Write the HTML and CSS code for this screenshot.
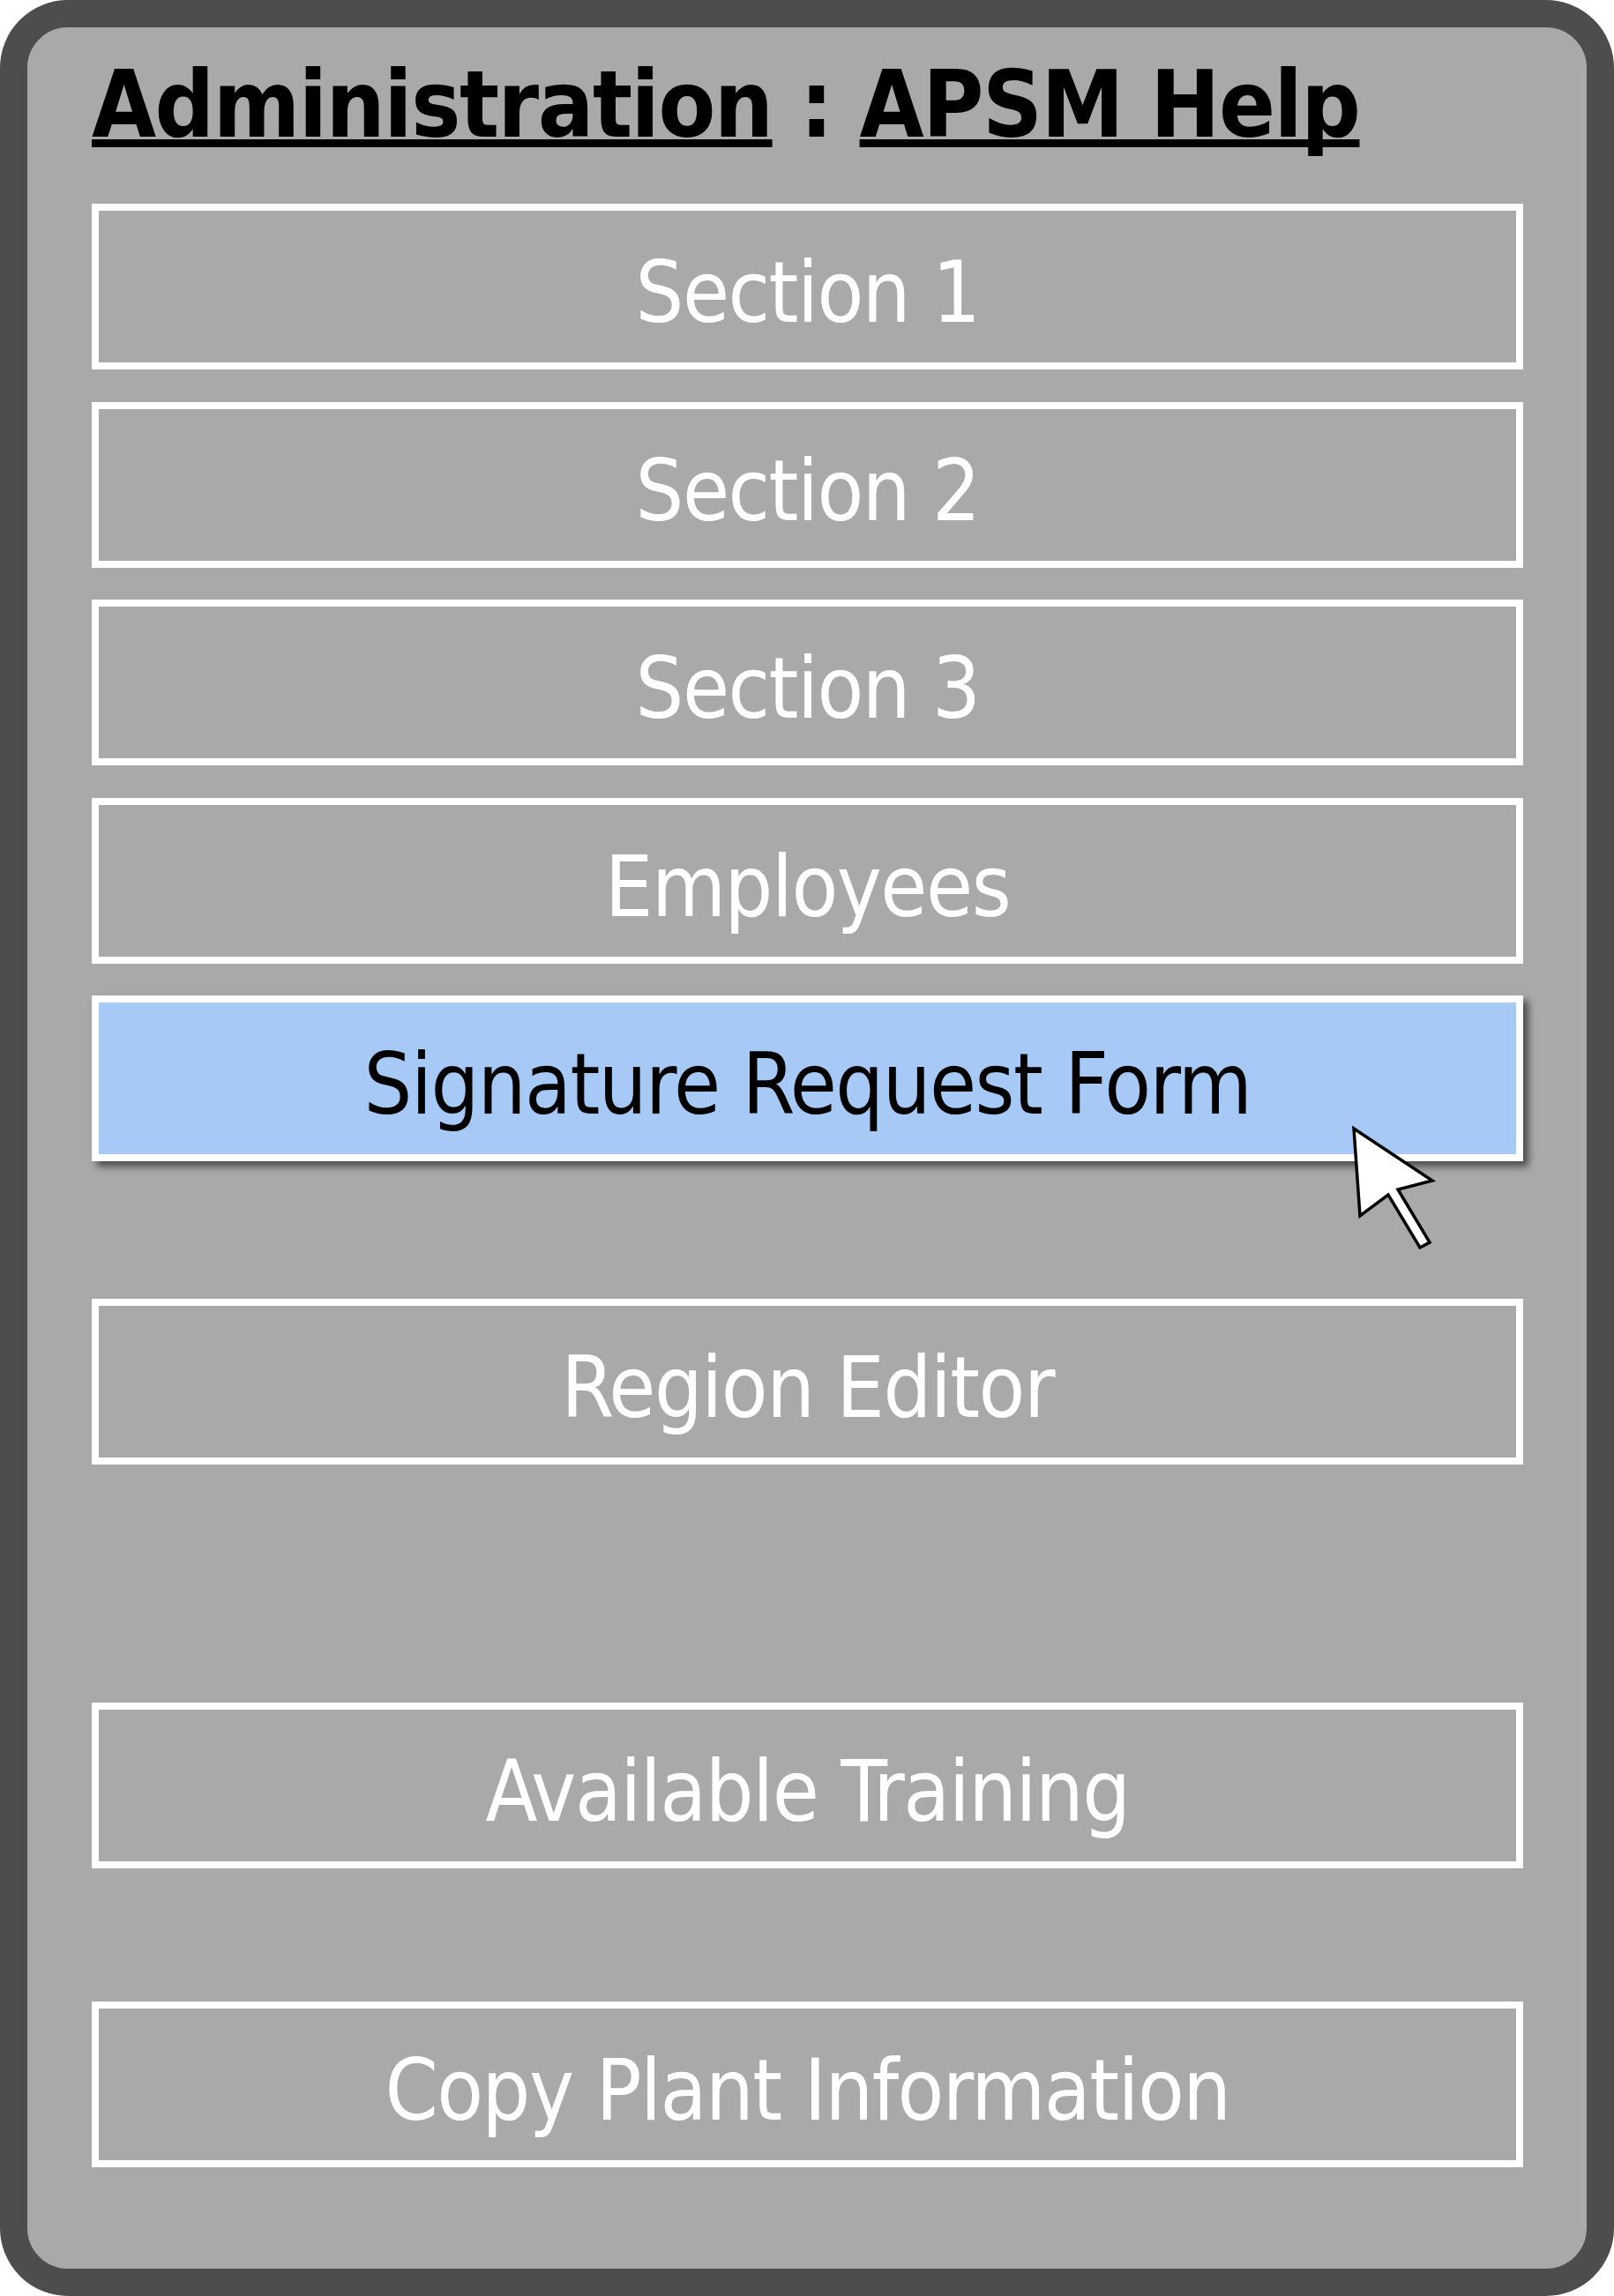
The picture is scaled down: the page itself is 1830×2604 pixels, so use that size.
FILE: index.html
```html
<!DOCTYPE html>
<html lang="en">
<head>
<meta charset="utf-8">
<title>Administration : APSM Help</title>
<link rel="stylesheet" href="styles.css">
</head>
<body>
<div class="panel">
  <h1 class="panel-title"><a class="crumb" href="#">Administration</a><span class="sep"> : </span><a class="crumb" href="#">APSM Help</a></h1>
  <nav class="menu">
    <a class="menu-item" href="#">Section 1</a>
    <a class="menu-item" href="#">Section 2</a>
    <a class="menu-item" href="#">Section 3</a>
    <a class="menu-item" href="#">Employees</a>
    <a class="menu-item is-hover" href="#">Signature Request Form
      <svg class="pointer" width="104" height="150" viewBox="0 0 104 150" aria-hidden="true">
        <path d="M7 7 L14 106 L46 82 L82 142 L93 136 L57 76 L96 66 Z" fill="#ffffff" stroke="#000000" stroke-width="3.5" stroke-linejoin="miter"/>
      </svg>
    </a>
    <a class="menu-item gap-md" href="#">Region Editor</a>
    <a class="menu-item gap-lg" href="#">Available Training</a>
    <a class="menu-item gap-sm" href="#">Copy Plant Information</a>
  </nav>
</div>
</body>
</html>
```
FILE: styles.css
```css
html, body {
  margin: 0;
  padding: 0;
  background: #ffffff;
}

.panel {
  box-sizing: border-box;
  width: 1830px;
  height: 2604px;
  border: 31px solid #4d4d4d;
  border-radius: 77px;
  background: #a9a9a9;
  padding: 36px 72px 0 73px;
  font-family: "DejaVu Sans Condensed", "DejaVu Sans", sans-serif;
  font-stretch: condensed;
}

.panel-title {
  margin: 0 0 59px 0;
  font-size: 105px;
  line-height: 1;
  font-weight: bold;
  letter-spacing: -1.5px;
  color: #000000;
  white-space: nowrap;
}

.crumb {
  color: #000000;
  text-decoration: underline;
  text-decoration-thickness: 9px;
  text-underline-offset: 3px;
  text-decoration-skip-ink: none;
}

.sep {
  color: #000000;
}

.menu {
  display: flex;
  flex-direction: column;
  gap: 36.5px;
}

.menu-item {
  position: relative;
  box-sizing: border-box;
  height: 188px;
  border: 8px solid #ffffff;
  display: flex;
  align-items: center;
  justify-content: center;
  padding-top: 14px;
  font-size: 96px;
  line-height: 1;
  letter-spacing: -1.5px;
  color: #ffffff;
  text-decoration: none;
  white-space: nowrap;
}

.menu-item.is-hover {
  background: #a6caf5;
  color: #000000;
  box-shadow: 6px 6px 8px rgba(0, 0, 0, 0.55);
}

.gap-md { margin-top: 119.5px; }
.gap-lg { margin-top: 233.5px; }
.gap-sm { margin-top: 114.5px; }

.pointer {
  position: absolute;
  left: 1416px;
  top: 136px;
  overflow: visible;
}
```
